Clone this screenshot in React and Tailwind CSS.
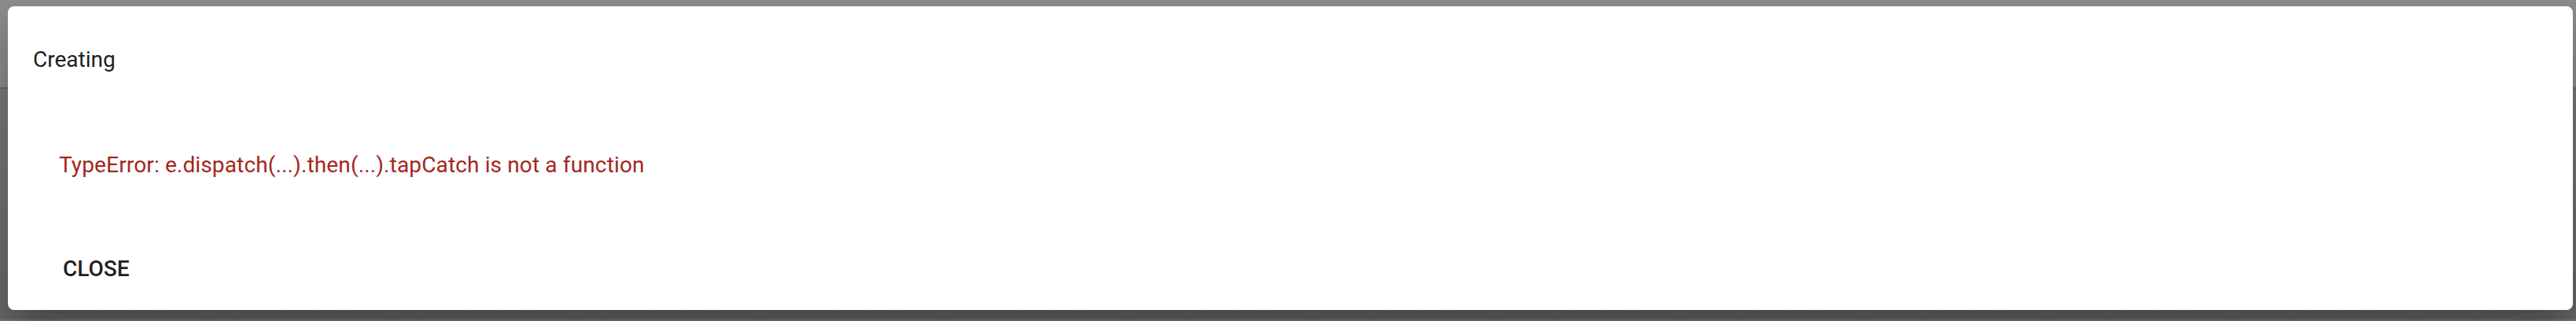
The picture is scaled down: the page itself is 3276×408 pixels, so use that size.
import React from "react";

const App = () => {
  return (
    <div className="relative h-[408px] w-full overflow-hidden bg-[#7b7b7b]" style={{ fontFamily: "Roboto, 'Liberation Sans', sans-serif" }}>
      {/* page behind the backdrop */}
      <div className="h-[113px] border-b-2 border-[#6c6c6c] bg-[#8e8e8e]" />
      <div className="h-[293px] bg-gradient-to-b from-[#7d7d7d] to-[#6b6b6b]" />

      {/* dialog */}
      <div className="absolute left-[10px] top-[8px] flex h-[386px] w-[3262px] flex-col rounded-[8px] bg-white shadow-[0_22px_30px_-14px_rgba(0,0,0,0.2),0_48px_76px_6px_rgba(0,0,0,0.14),0_18px_60px_8px_rgba(0,0,0,0.1)]">
        <div className="pl-[32px] pt-[48px] text-[28px] leading-[40px] text-[#212121]">Creating</div>
        <div className="mt-[94px] pl-[65px] text-[28px] leading-[40px] tracking-[0.005em] text-[#a2281b]">
          TypeError: e.dispatch(...).then(...).tapCatch is not a function
        </div>
        <div className="mt-[80px] flex pl-[54px]">
          <button type="button" className="rounded-[8px] px-[16px] py-[12px] text-[28px] font-medium uppercase leading-[40px] text-[#212121]">
            Close
          </button>
        </div>
      </div>
    </div>
  );
};

export default App;
